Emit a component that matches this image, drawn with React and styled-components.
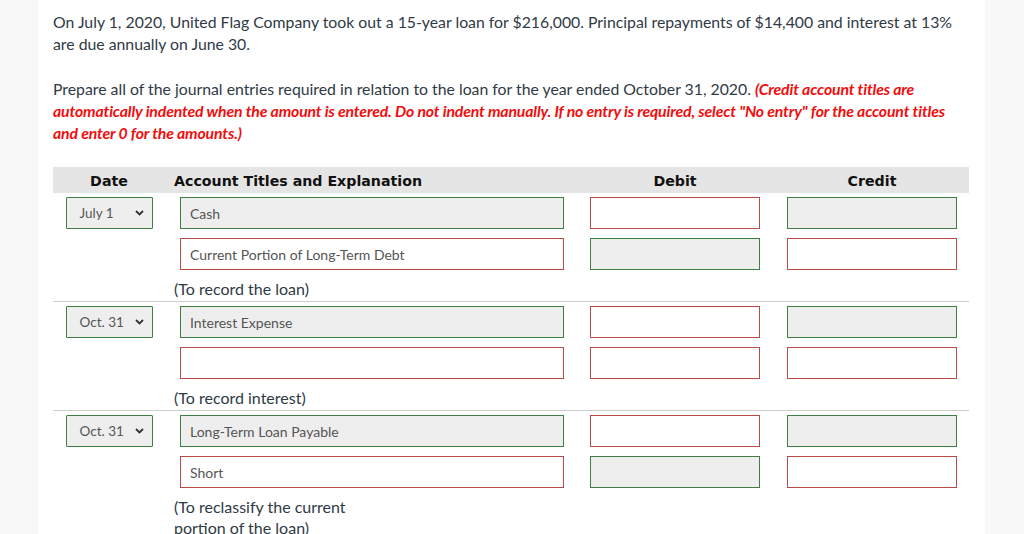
import React from "react";
import styled, { createGlobalStyle } from "styled-components";

const GlobalStyle = createGlobalStyle`
  html, body {
    margin: 0;
    padding: 0;
    background: #f8f8f8;
    font-family: Lato, "Open Sans", sans-serif;
  }
`;

const Page = styled.div`
  width: 1024px;
  height: 534px;
  overflow: hidden;
  display: flex;
  flex-direction: column;
`;

const TopShade = styled.div`
  height: 1px;
  background: #e2e2e2;
  box-shadow: 0 1px 4px rgba(0, 0, 0, 0.22);
  position: relative;
  z-index: 1;
`;

const Panel = styled.div`
  margin-left: 38px;
  width: 947px;
  flex: 1;
  background: #fff;
  padding: 11px 16px 0 15px;
  box-sizing: border-box;
`;

const Para = styled.p`
  margin: 0 0 23px;
  font-size: 15.8px;
  line-height: 22px;
  color: #2f3a45;
`;

const Warn = styled.em`
  color: #f20d0d;
  font-weight: 700;
  font-style: italic;
  letter-spacing: -0.15px;
`;

const Table = styled.div`
  width: 916px;
  margin-top: 22px;
`;

const Grid = styled.div`
  display: grid;
  grid-template-columns: 112px 410px 200px 194px;
`;

const Head = styled(Grid)`
  background: #e5e5e5;
  height: 26px;
  align-items: center;
  font-family: "DejaVu Sans", Verdana, sans-serif;
  font-weight: 700;
  font-size: 14.2px;
  color: #111;
  padding-top: 1px;
  box-sizing: border-box;
`;

const HeadCell = styled.div`
  text-align: ${p => (p.$left ? "left" : "center")};
  padding-left: ${p => (p.$left ? "9px" : "0")};
`;

const Entry = styled(Grid)`
  padding: 4px 0 2px;
  border-bottom: 1px solid #cdcdcd;
  row-gap: 9px;
  &:last-child {
    border-bottom: none;
  }
`;

const DateCell = styled.div`
  display: flex;
  justify-content: center;
`;

const Select = styled.div`
  width: 87px;
  height: 32px;
  box-sizing: border-box;
  border: 1px solid #3f7f46;
  border-radius: 1px;
  background: #eee;
  display: flex;
  align-items: center;
  justify-content: space-between;
  padding: 0 8px 0 13px;
  font-size: 13.5px;
  color: #555;
`;

const AcctCell = styled.div`
  padding: 0 11px 0 15px;
`;

const AmtCell = styled.div`
  display: flex;
  justify-content: center;
`;

const Field = styled.div`
  height: 32px;
  box-sizing: border-box;
  width: ${p => p.$w || "100%"};
  border: 1px solid ${p => (p.$ok ? "#3f7f46" : "#b94a48")};
  background: ${p => (p.$ok ? "#eee" : "#fff")};
  display: flex;
  align-items: center;
  padding: 0 9px;
  font-size: 14px;
  color: #555;
`;

const Memo = styled.div`
  grid-column: 2;
  padding-left: 9px;
  margin-top: -1px;
  max-width: 210px;
  font-size: 16px;
  line-height: 21px;
  color: #2f3a45;
`;

const Chevron = () => (
  <svg width="9" height="6" viewBox="0 0 9 6">
    <path d="M1 1l3.5 3.5L8 1" fill="none" stroke="#333" strokeWidth="1.8" />
  </svg>
);

const entries = [
  {
    date: "July 1",
    lines: [
      { acct: "Cash", acctOk: true, debitOk: false, creditOk: true },
      { acct: "Current Portion of Long-Term Debt", acctOk: false, debitOk: true, creditOk: false },
    ],
    memo: "(To record the loan)",
  },
  {
    date: "Oct. 31",
    lines: [
      { acct: "Interest Expense", acctOk: true, debitOk: false, creditOk: true },
      { acct: "", acctOk: false, debitOk: false, creditOk: false },
    ],
    memo: "(To record interest)",
  },
  {
    date: "Oct. 31",
    lines: [
      { acct: "Long-Term Loan Payable", acctOk: true, debitOk: false, creditOk: true },
      { acct: "Short", acctOk: false, debitOk: true, creditOk: false },
    ],
    memo: "(To reclassify the current portion of the loan)",
  },
];

export default function App() {
  return (
    <Page>
      <GlobalStyle />
      <TopShade />
      <Panel>
        <Para>
          On July 1, 2020, United Flag Company took out a 15-year loan for $216,000. Principal
          repayments of $14,400 and interest at 13% are due annually on June 30.
        </Para>
        <Para>
          Prepare all of the journal entries required in relation to the loan for the year ended
          October 31, 2020.{" "}
          <Warn>
            (Credit account titles are automatically indented when the amount is entered. Do not
            indent manually. If no entry is required, select "No entry" for the account titles and
            enter 0 for the amounts.)
          </Warn>
        </Para>
        <Table>
          <Head>
            <HeadCell>Date</HeadCell>
            <HeadCell $left>Account Titles and Explanation</HeadCell>
            <HeadCell>Debit</HeadCell>
            <HeadCell>Credit</HeadCell>
          </Head>
          {entries.map((e, i) => (
            <Entry key={i}>
              {e.lines.map((l, j) => (
                <React.Fragment key={j}>
                  <DateCell>
                    {j === 0 && (
                      <Select>
                        <span>{e.date}</span>
                        <Chevron />
                      </Select>
                    )}
                  </DateCell>
                  <AcctCell>
                    <Field $ok={l.acctOk}>{l.acct}</Field>
                  </AcctCell>
                  <AmtCell>
                    <Field $ok={l.debitOk} $w="170px" />
                  </AmtCell>
                  <AmtCell>
                    <Field $ok={l.creditOk} $w="170px" />
                  </AmtCell>
                </React.Fragment>
              ))}
              <Memo>{e.memo}</Memo>
            </Entry>
          ))}
        </Table>
      </Panel>
    </Page>
  );
}
